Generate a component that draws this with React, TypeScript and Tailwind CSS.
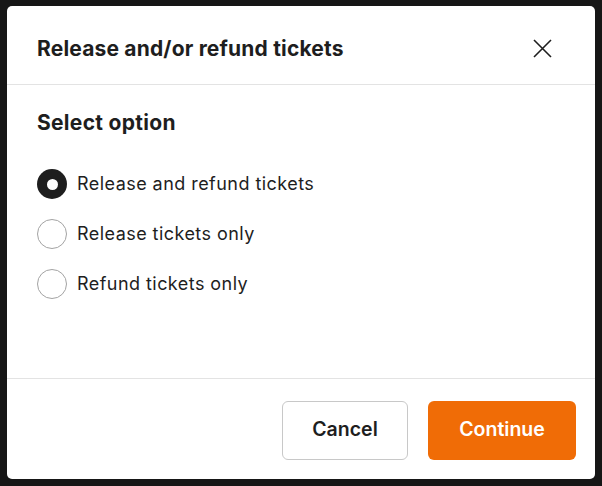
import { useState } from 'react';

const OPTIONS = [
  { id: 'both', label: 'Release and refund tickets' },
  { id: 'release', label: 'Release tickets only' },
  { id: 'refund', label: 'Refund tickets only' },
];

export default function App() {
  const [selected, setSelected] = useState('both');

  return (
    <div className="w-[602px] h-[486px] bg-[#161616] pt-[6px] pl-[7px] font-['Inter',sans-serif]">
      <div className="w-[588px] h-[473px] bg-white rounded-[5px] flex flex-col">
        <div className="h-[79px] flex items-center justify-between pl-[30px] pr-[43px] pt-[7px] border-b border-[#e3e3e3]">
          <h2 className="text-[21px] font-bold text-[#1e1e1e] tracking-[0.18px]">Release and/or refund tickets</h2>
          <button className="text-[#1e1e1e]">
            <svg width="19" height="19" viewBox="0 0 19 19" fill="none" stroke="currentColor" strokeWidth="1.6">
              <path d="M1 1L18 18M18 1L1 18" />
            </svg>
          </button>
        </div>

        <div className="flex-1 pl-[30px] pt-[23px]">
          <h3 className="text-[21px] font-bold text-[#1e1e1e] leading-[30px] tracking-[0.3px]">Select option</h3>
          <div className="mt-[31px] flex flex-col gap-[20px]">
            {OPTIONS.map(opt => {
              const active = selected === opt.id;
              return (
                <label key={opt.id} className="flex items-center gap-[10px] cursor-pointer" onClick={() => setSelected(opt.id)}>
                  {active ? (
                    <span className="w-[30px] h-[30px] rounded-full bg-[#1e1e1e] flex items-center justify-center">
                      <span className="w-[11px] h-[11px] rounded-full bg-white" />
                    </span>
                  ) : (
                    <span className="w-[30px] h-[30px] rounded-full border-[1.5px] border-[#a3a3a3]" />
                  )}
                  <span className="text-[18px] text-[#1e1e1e] leading-[30px] tracking-[0.45px]">{opt.label}</span>
                </label>
              );
            })}
          </div>
        </div>

        <div className="h-[101px] border-t border-[#e3e3e3] flex items-center justify-end gap-[20px] pr-[19px] pt-[2px]">
          <button className="w-[126px] h-[59px] rounded-[6px] border border-[#c8c8c8] text-[19.5px] font-semibold text-[#1e1e1e]">Cancel</button>
          <button className="w-[148px] h-[59px] rounded-[6px] bg-[#f06c06] text-[19.5px] font-semibold text-white">Continue</button>
        </div>
      </div>
    </div>
  );
}
